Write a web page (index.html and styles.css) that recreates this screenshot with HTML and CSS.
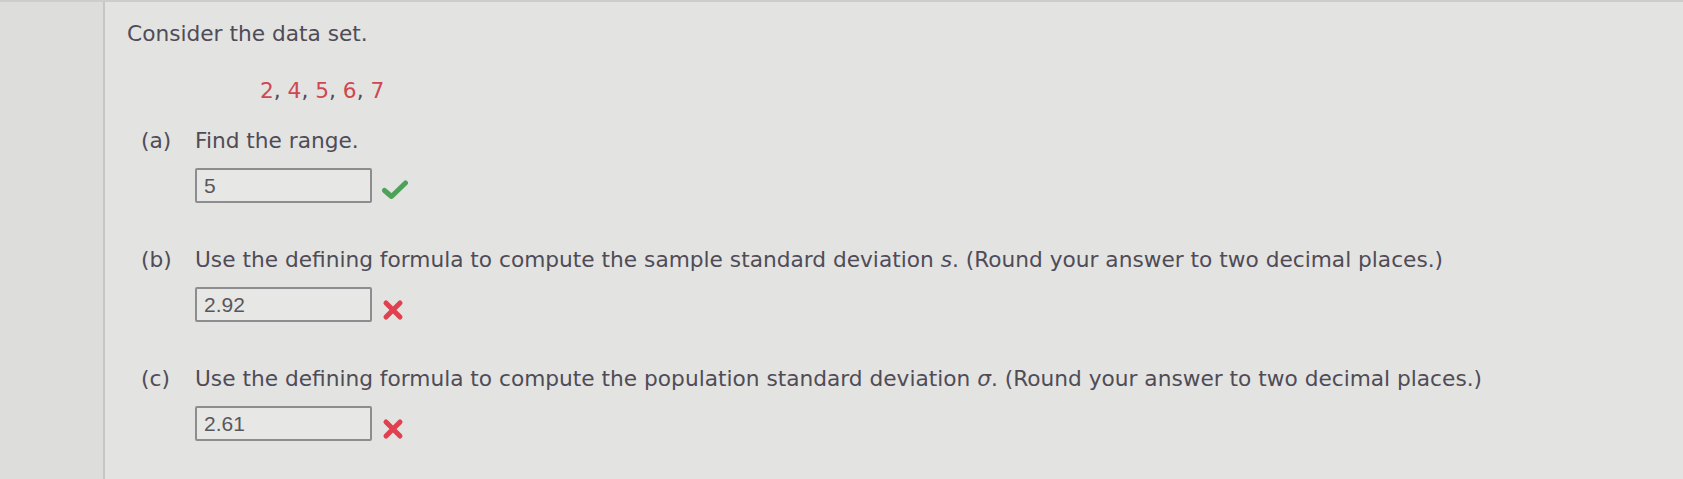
FILE: index.html
```html
<!DOCTYPE html>
<html lang="en">
<head>
<meta charset="utf-8">
<title>Consider the data set</title>
<link rel="stylesheet" href="styles.css">
</head>
<body>
<div class="page">
  <aside class="sidebar"></aside>
  <main class="question">
    <p class="intro">Consider the data set.</p>
    <p class="data"><span class="num">2</span>, <span class="num">4</span>, <span class="num">5</span>, <span class="num">6</span>, <span class="num">7</span></p>

    <section class="part">
      <div class="prompt"><span class="label">(a)</span><span class="text">Find the range.</span></div>
      <div class="answer-row">
        <div class="answer">5</div>
        <svg class="mark" width="26" height="20" viewBox="0 0 26 20"><path d="M2.5 10.5 L9.5 16.5 L23.5 3" fill="none" stroke="#4da25a" stroke-width="5" stroke-linecap="round" stroke-linejoin="round"/></svg>
      </div>
    </section>

    <section class="part">
      <div class="prompt"><span class="label">(b)</span><span class="text">Use the defining formula to compute the sample standard deviation <i class="var">s</i>. (Round your answer to two decimal places.)</span></div>
      <div class="answer-row">
        <div class="answer">2.92</div>
        <svg class="mark wrong" width="22" height="22" viewBox="0 0 22 22"><path d="M4 4 L18 18 M18 4 L4 18" fill="none" stroke="#e0404f" stroke-width="5" stroke-linecap="round"/></svg>
      </div>
    </section>

    <section class="part">
      <div class="prompt"><span class="label">(c)</span><span class="text">Use the defining formula to compute the population standard deviation <i class="var">σ</i>. (Round your answer to two decimal places.)</span></div>
      <div class="answer-row">
        <div class="answer">2.61</div>
        <svg class="mark wrong" width="22" height="22" viewBox="0 0 22 22"><path d="M4 4 L18 18 M18 4 L4 18" fill="none" stroke="#e0404f" stroke-width="5" stroke-linecap="round"/></svg>
      </div>
    </section>
  </main>
</div>
</body>
</html>
```

FILE: styles.css
```css
html, body {
  margin: 0;
  padding: 0;
  height: 100%;
  background: #e3e3e1;
}

.page {
  display: flex;
  min-height: 100%;
  border-top: 2px solid #cdcdcb;
  box-sizing: border-box;
  font-family: "DejaVu Sans", Verdana, sans-serif;
  font-size: 21.7px;
  line-height: 30px;
  color: #4f4c57;
}

.sidebar {
  width: 103px;
  flex: none;
  background: #dddddb;
  border-right: 2px solid #c6c6c4;
}

.question {
  flex: 1;
  padding: 17px 0 0 22px;
}

.intro {
  margin: 0;
}

.data {
  margin: 27px 0 0 133px;
}

.num {
  color: #cf4750;
}

.part {
  margin-top: 20px;
  margin-left: 14px;
}

.part + .part {
  margin-top: 42px;
}

.prompt {
  display: flex;
}

.label {
  width: 54px;
  flex: none;
}

.var {
  font-style: italic;
}

.answer-row {
  display: flex;
  align-items: flex-end;
  margin: 12px 0 0 54px;
  gap: 10px;
}

.answer {
  width: 166px;
  height: 31px;
  padding-left: 7px;
  border: 2px solid #8d8d8f;
  border-radius: 2px;
  background: #e7e7e5;
  font-family: "Liberation Sans", Arial, sans-serif;
  font-size: 21px;
  line-height: 31px;
  color: #58585c;
}

.mark {
  flex: none;
  margin-bottom: 3px;
}

.mark.wrong {
  margin-bottom: 1px;
}
```
